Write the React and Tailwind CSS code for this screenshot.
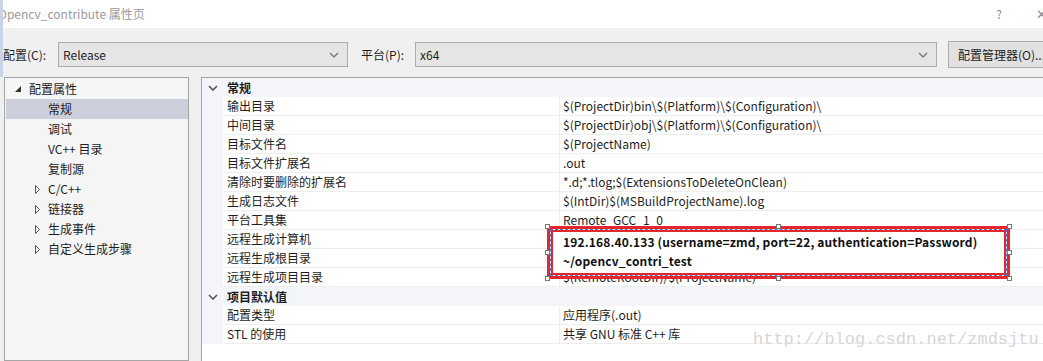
import React from 'react';

const FONT = { fontFamily: '"Noto Sans CJK SC", "Noto Sans", sans-serif' };

const treeItems = [
  { label: '常规', selected: true },
  { label: '调试' },
  { label: 'VC++ 目录' },
  { label: '复制源' },
  { label: 'C/C++', arrow: true },
  { label: '链接器', arrow: true },
  { label: '生成事件', arrow: true },
  { label: '自定义生成步骤', arrow: true },
];

const general = [
  ['输出目录', '$(ProjectDir)bin\\$(Platform)\\$(Configuration)\\'],
  ['中间目录', '$(ProjectDir)obj\\$(Platform)\\$(Configuration)\\'],
  ['目标文件名', '$(ProjectName)'],
  ['目标文件扩展名', '.out'],
  ['清除时要删除的扩展名', '*.d;*.tlog;$(ExtensionsToDeleteOnClean)'],
  ['生成日志文件', '$(IntDir)$(MSBuildProjectName).log'],
  ['平台工具集', 'Remote_GCC_1_0'],
  ['远程生成计算机', ''],
  ['远程生成根目录', ''],
  ['远程生成项目目录', '$(RemoteRootDir)/$(ProjectName)'],
];

const defaults = [
  ['配置类型', '应用程序(.out)'],
  ['STL 的使用', '共享 GNU 标准 C++ 库'],
];

const Chevron = ({ className = '' }) => (
  <svg width="10" height="6" viewBox="0 0 10 6" className={className}>
    <polyline points="1,1 5,5 9,1" fill="none" stroke="#6b6b6b" strokeWidth="1.2" />
  </svg>
);

const Combo = ({ value, width }) => (
  <div className={`shrink-0 flex items-center h-[25px] border border-[#adadad] bg-[#e5e5e5] pl-[4px] pr-[8px] ${width}`}>
    <span className="flex-1 text-[12px] text-[#1e1e1e]">{value}</span>
    <Chevron />
  </div>
);

const Handle = ({ className }) => (
  <div className={`absolute w-[5px] h-[5px] bg-white border border-[#777] ${className}`} />
);

const HeaderRow = ({ title }) => (
  <div className="flex items-center h-[19px] bg-[#f3f5fa]">
    <div className="w-[21px] flex justify-center">
      <svg width="10" height="6" viewBox="0 0 10 6">
        <polyline points="1,1 5,5 9,1" fill="none" stroke="#555" strokeWidth="1.6" />
      </svg>
    </div>
    <span className="pl-[4px] text-[12px] font-bold text-[#1e1e1e]">{title}</span>
  </div>
);

const PropRow = ({ name, value }) => (
  <div className="flex h-[19px] bg-[#f3f5fa]">
    <div className="w-[21px]" />
    <div className="w-[337px] flex items-center bg-white border-r border-b border-[#eeeeee] pl-[4px] text-[12px] text-[#1e1e1e]">
      {name}
    </div>
    <div className="flex-1 flex items-center bg-white border-b border-[#eeeeee] pl-[3px] text-[12px] text-[#1e1e1e] whitespace-nowrap">
      {value}
    </div>
  </div>
);

export default function App() {
  return (
    <div className="w-[1043px] h-[361px] overflow-hidden bg-[#f0f0f0] flex flex-col" style={FONT}>
      {/* title bar */}
      <div className="flex items-center h-[28px] bg-white border-l-[3px] border-[#c9d4e6] overflow-hidden">
        <span className="ml-[-5px] text-[12px] text-[#9a9a9a] flex-1">Opencv_contribute 属性页</span>
        <span className="text-[12px] text-[#8a8a8a] mr-[34px]">?</span>
        <span className="text-[13px] text-[#8a8a8a] mr-[-4px]">✕</span>
      </div>

      {/* config toolbar */}
      <div className="flex items-center h-[49px] border-l-[3px] border-[#c9d4e6] pt-[4px] overflow-hidden">
        <span className="shrink-0 text-[12px] text-[#1e1e1e] w-[55px]">配置(C):</span>
        <Combo value="Release" width="w-[290px]" />
        <span className="shrink-0 ml-[13px] text-[12px] text-[#1e1e1e] w-[54px]">平台(P):</span>
        <Combo value="x64" width="w-[522px]" />
        <div className="shrink-0 ml-[11px] h-[27px] w-[110px] flex items-center border border-[#adadad] bg-[#e1e1e1] pl-[9px] text-[12px] text-[#1e1e1e] whitespace-nowrap">
          配置管理器(O)...
        </div>
      </div>

      {/* main */}
      <div className="flex flex-1 pl-[4px]">
        <div className="w-[185px] border border-[#a5a5a5] bg-[#f5f5f5] pt-[1px] pl-[1px]">
          <div className="flex items-center h-[20px]">
            <svg width="6" height="6" viewBox="0 0 6 6" className="ml-[9px]">
              <polygon points="6,0 6,6 0,6" fill="#333" />
            </svg>
            <span className="ml-[8px] text-[12px] text-[#1e1e1e]">配置属性</span>
          </div>
          {treeItems.map((it) => (
            <div
              key={it.label}
              className={`flex items-center h-[20px] ${it.selected ? 'bg-[#cccedb]' : ''}`}
            >
              <div className="w-[42px] flex justify-end pr-[8px]">
                {it.arrow && (
                  <svg width="5" height="9" viewBox="0 0 5 9">
                    <polygon points="0.5,0.5 4.5,4.5 0.5,8.5" fill="none" stroke="#555" strokeWidth="1" />
                  </svg>
                )}
              </div>
              <span className="text-[12px] text-[#1e1e1e] whitespace-nowrap">{it.label}</span>
            </div>
          ))}
        </div>

        <div className="ml-[12px] flex-1 relative border-l border-t border-[#a5a5a5] bg-white">
          <HeaderRow title="常规" />
          {general.map(([n, v]) => (
            <PropRow key={n} name={n} value={v} />
          ))}
          <HeaderRow title="项目默认值" />
          {defaults.map(([n, v]) => (
            <PropRow key={n} name={n} value={v} />
          ))}

          {/* highlight annotation */}
          <div className="absolute left-[345px] top-[148px] w-[463px] h-[53px]">
            <div className="h-full border-[3px] border-[#e4262f]">
              <div className="h-full border border-dashed border-[#4a7bd0] bg-white">
                <div className="h-full border-2 border-[#e4262f] bg-white flex flex-col pl-[10px] text-[12px] font-bold text-[#111]">
                  <div className="h-[19px] flex items-center whitespace-nowrap tracking-[0.15px]">
                    192.168.40.133 (username=zmd, port=22, authentication=Password)
                  </div>
                  <div className="h-[19px] flex items-center tracking-[0.15px]">~/opencv_contri_test</div>
                </div>
              </div>
            </div>
            <Handle className="left-[-2px] top-[-2px]" />
            <Handle className="left-[229px] top-[-2px]" />
            <Handle className="right-[-2px] top-[-2px]" />
            <Handle className="left-[-2px] top-[24px]" />
            <Handle className="right-[-2px] top-[24px]" />
            <Handle className="left-[-2px] bottom-[-2px]" />
            <Handle className="left-[229px] bottom-[-2px]" />
            <Handle className="right-[-2px] bottom-[-2px]" />
          </div>

          {/* watermark */}
          <div
            className="absolute left-[551px] top-[249px] text-[17px] text-[#d6d6d6] whitespace-nowrap"
            style={{ fontFamily: '"Liberation Mono", monospace', textShadow: '0 0 2px #fff' }}
          >
            http://blog.csdn.net/zmdsjtu
          </div>
        </div>
      </div>
    </div>
  );
}
